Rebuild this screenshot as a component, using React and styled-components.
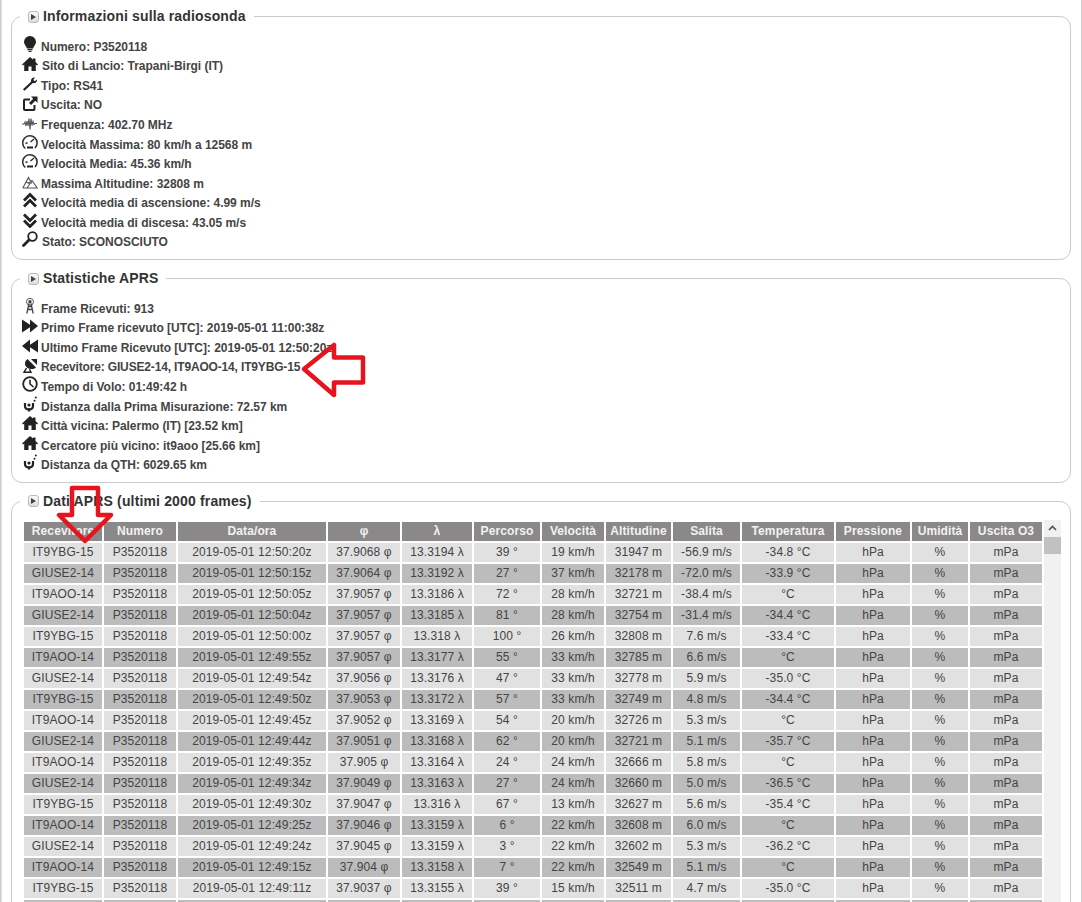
import React from "react";
import styled, { createGlobalStyle } from "styled-components";

const GlobalStyle = createGlobalStyle`
  html, body {
    margin: 0;
    height: 100%;
    overflow: hidden;
    background: #fff;
  }
  body {
    font-family: "Liberation Sans", Arial, sans-serif;
    color: #444;
  }
`;

const Page = styled.div`
  position: relative;
  box-sizing: border-box;
  height: 902px;
  overflow: hidden;
  padding: 9px 10px 0 11px;
  border-left: 1px solid #ccc;
  border-right: 1px solid #ccc;
  background: #fff;
  box-shadow: inset 1px 0 0 #e4e4e4;
`;

const Panel = styled.fieldset`
  margin: 0 0 11px -1px;
  padding: ${({ $top }) => $top}px 10px ${({ $top }) => 20 - $top}px 10px;
  min-width: 0;
  border: 1px solid #ccc;
  border-radius: 11px;
`;

const PanelTitle = styled.legend`
  display: flex;
  align-items: center;
  gap: 4px;
  margin-left: -2px;
  padding: 0 8px;
  height: 15px;
  font-size: 14px;
  line-height: 15px;
  font-weight: bold;
  letter-spacing: 0.15px;
  color: #333;
`;

const ToggleButton = styled.span`
  display: flex;
  align-items: center;
  justify-content: center;
  box-sizing: border-box;
  width: 11px;
  height: 12px;
  border: 1px solid #bbb;
  border-radius: 3px;
  background: linear-gradient(#fafafa, #ddd);
  &::after {
    content: "";
    border-left: 5px solid #444;
    border-top: 3px solid transparent;
    border-bottom: 3px solid transparent;
  }
`;

const InfoList = styled.div`
  display: grid;
  grid-auto-rows: 19.55px;
`;

const InfoRow = styled.div`
  display: flex;
  align-items: center;
  font-size: 12px;
  font-weight: bold;
  letter-spacing: ${({ $tight }) => ($tight ? "-0.16px" : "-0.03px")};
  color: #444;
  white-space: nowrap;
`;

const IconBox = styled.svg`
  flex: none;
  align-self: flex-start;
  width: 16px;
  height: 16px;
  margin: -1px ${({ $gap }) => $gap ?? 3}px 0 0;
`;

const TableArea = styled.div`
  display: flex;
  align-items: flex-start;
`;

const DataTable = styled.table`
  flex: none;
  table-layout: fixed;
  width: 1022px;
  border-collapse: separate;
  border-spacing: 2px;
  font-size: 12px;
  letter-spacing: 0.1px;
`;

const HeadCell = styled.th`
  height: 19px;
  padding: 0;
  background: #8a8888;
  color: #f2f2f2;
  font-weight: bold;
  text-align: center;
  white-space: nowrap;
`;

const DataRow = styled.tr`
  background: ${({ $dark }) => ($dark ? "#bcbcbc" : "#e1e1e1")};
`;

const DataCell = styled.td`
  height: 19px;
  padding: 0;
  color: #444;
  text-align: center;
  white-space: nowrap;
`;

const ScrollTrack = styled.div`
  flex: none;
  width: 17px;
  height: 500px;
  background: #f1f1f1;
`;

const ScrollArrow = styled.div`
  display: flex;
  align-items: center;
  justify-content: center;
  height: 17px;
`;

const ScrollThumb = styled.div`
  height: 17px;
  background: #c1c1c1;
`;

const MarkArrow = styled.svg`
  position: absolute;
  left: ${({ $x }) => $x}px;
  top: ${({ $y }) => $y}px;
  width: ${({ $w }) => $w}px;
  height: ${({ $h }) => $h}px;
  overflow: visible;
  pointer-events: none;
`;

const icons = {
  bulb: (
    <>
      <path d="M2 6a5.900 5.900 0 1 1 12 0c0 2.700-2.300 3.800-3 6.400H5C4.300 9.800 2 8.700 2 6z" />
      <rect x="5.500" y="13" width="5" height="1.300" />
      <rect x="6.500" y="15" width="3" height="1" />
    </>
  ),
  home: <path d="M8 1L0 8.500l1 1 1.200-.9V15h4.300v-4.500h3V15h4.300V8.600l1.200.9 1-1L13.500 6V2.500H11v1.100z" />,
  wrench: (
    <path d="M1 14.200l1.500 1.500 8.300-7.600c1.600.5 3.400-.2 4-1.800l.2-1.800-2.200 1.700-1.500-1.300 1.700-2.300c-2-.4-3.800.8-4 2.800v1.300z" />
  ),
  share: (
    <>
      <path d="M8 4.500H3a1 1 0 0 0-1 1V14a1 1 0 0 0 1 1h8.500a1 1 0 0 0 1-1V10" fill="none" stroke="#222" strokeWidth="2" />
      <path d="M9 1.500h6.500V8l-2.200-2.200L9 10 7 8l4.200-4.300z" />
    </>
  ),
  wave: (
    <path
      d="M0 10h2l1-2 1 4 1-5 1 5 1-7.500 1 11 1-11 1 7 1-4 1 3 1-1h2"
      fill="none"
      stroke="#555"
      strokeWidth="1.100"
    />
  ),
  gauge: (
    <>
      <path d="M3.300 14.500A7.200 7.200 0 1 1 13 14" fill="none" stroke="#333" strokeWidth="1.600" />
      <path d="M3.500 9.500l2-.7M12 5L8.500 8" fill="none" stroke="#333" strokeWidth="1.500" />
      <rect x="5" y="12.500" width="6" height="2" fill="#222" />
    </>
  ),
  peaks: (
    <path
      d="M.8 15L6.500 4.500l3.300 6M5 15l5-7.500L15.200 15zM.8 15h14.400M4.500 9l2 1.200 1.200-1.200"
      fill="none"
      stroke="#555"
      strokeWidth="1.100"
    />
  ),
  up: <path d="M2 8.500l6-6 6 6M2 14.500l6-6 6 6" fill="none" stroke="#222" strokeWidth="2.800" />,
  down: <path d="M2 2.500l6 6 6-6M2 8.500l6 6 6-6" fill="none" stroke="#222" strokeWidth="2.800" />,
  search: (
    <>
      <circle cx="10.500" cy="5.500" r="4.300" fill="none" stroke="#222" strokeWidth="1.800" />
      <path d="M7 9l-5.500 5.500" stroke="#222" strokeWidth="2.800" strokeLinecap="round" />
    </>
  ),
  tower: (
    <>
      <circle cx="8" cy="3.800" r="3.500" fill="none" stroke="#555" strokeWidth="1" />
      <circle cx="8" cy="3.800" r="1.700" fill="#444" />
      <path d="M7 5.500L4.800 15.500M9 5.500l2.200 10M5.800 11.500h4.400M6.500 8.500h3" fill="none" stroke="#444" strokeWidth="1.300" />
    </>
  ),
  forward: <path d="M0 1.500l8 5.200V1.500L16 8l-8 6.500V9.300l-8 5.200z" />,
  backward: <path d="M16 2.500L8 7.700V2.500L0 9l8 6.500v-5.200l8 5.200z" />,
  dish: (
    <>
      <path d="M5.500 2l8.500 8.500c-2.700 2.300-7 2-9.500-.5C2 7.500 2.700 4.300 5.500 2z" />
      <path d="M4.500 11l-2.500 4.300h7l-1.500-3" fill="none" stroke="#222" strokeWidth="1.400" />
      <path d="M9 2h6v6z" />
    </>
  ),
  clock: (
    <>
      <circle cx="8" cy="8" r="6.800" fill="none" stroke="#222" strokeWidth="1.800" />
      <path d="M8 3.800V8l3.500 3" fill="none" stroke="#222" strokeWidth="1.600" />
    </>
  ),
  scope: (
    <>
      <path d="M3 7v3c0 4.500 8 4.500 8 0V7" fill="none" stroke="#222" strokeWidth="2.200" />
      <path d="M7 12.500v3" stroke="#222" strokeWidth="2.200" />
      <circle cx="7" cy="9" r="1.600" />
      <circle cx="12.500" cy="4.800" r="1" />
      <circle cx="13.800" cy="1.600" r="1" />
    </>
  ),
};

const Icon = ({ name, gap }) => (
  <IconBox viewBox="0 0 16 16" fill="#222" $gap={gap}>
    {icons[name]}
  </IconBox>
);

const radiosonde = [
  { icon: "bulb", text: "Numero: P3520118" },
  { icon: "home", text: "Sito di Lancio: Trapani-Birgi (IT)", gap: 4 },
  { icon: "wrench", text: "Tipo: RS41" },
  { icon: "share", text: "Uscita: NO" },
  { icon: "wave", text: "Frequenza: 402.70 MHz" },
  { icon: "gauge", text: "Velocità Massima: 80 km/h a 12568 m" },
  { icon: "gauge", text: "Velocità Media: 45.36 km/h" },
  { icon: "peaks", text: "Massima Altitudine: 32808 m" },
  { icon: "up", text: "Velocità media di ascensione: 4.99 m/s" },
  { icon: "down", text: "Velocità media di discesa: 43.05 m/s" },
  { icon: "search", text: "Stato: SCONOSCIUTO", gap: 4 },
];

const aprsStats = [
  { icon: "tower", text: "Frame Ricevuti: 913" },
  { icon: "forward", text: "Primo Frame ricevuto [UTC]: 2019-05-01 11:00:38z" },
  { icon: "backward", text: "Ultimo Frame Ricevuto [UTC]: 2019-05-01 12:50:20z" },
  { icon: "dish", text: "Recevitore: GIUSE2-14, IT9AOO-14, IT9YBG-15", tight: true },
  { icon: "clock", text: "Tempo di Volo: 01:49:42 h" },
  { icon: "scope", text: "Distanza dalla Prima Misurazione: 72.57 km" },
  { icon: "home", text: "Città vicina: Palermo (IT) [23.52 km]" },
  { icon: "home", text: "Cercatore più vicino: it9aoo [25.66 km]" },
  { icon: "scope", text: "Distanza da QTH: 6029.65 km" },
];

const columns = [
  ["Recevitore", 78],
  ["Numero", 72],
  ["Data/ora", 148],
  ["φ", 72],
  ["λ", 70],
  ["Percorso", 66],
  ["Velocità", 62],
  ["Altitudine", 65],
  ["Salita", 67],
  ["Temperatura", 92],
  ["Pressione", 74],
  ["Umidità", 56],
  ["Uscita O3", 72],
];

const frames = [
  ["IT9YBG-15", "12:50:20z", "37.9068", "13.3194", 39, 19, 31947, "-56.9", "-34.8"],
  ["GIUSE2-14", "12:50:15z", "37.9064", "13.3192", 27, 37, 32178, "-72.0", "-33.9"],
  ["IT9AOO-14", "12:50:05z", "37.9057", "13.3186", 72, 28, 32721, "-38.4", ""],
  ["GIUSE2-14", "12:50:04z", "37.9057", "13.3185", 81, 28, 32754, "-31.4", "-34.4"],
  ["IT9YBG-15", "12:50:00z", "37.9057", "13.318", 100, 26, 32808, "7.6", "-33.4"],
  ["IT9AOO-14", "12:49:55z", "37.9057", "13.3177", 55, 33, 32785, "6.6", ""],
  ["GIUSE2-14", "12:49:54z", "37.9056", "13.3176", 47, 33, 32778, "5.9", "-35.0"],
  ["IT9YBG-15", "12:49:50z", "37.9053", "13.3172", 57, 33, 32749, "4.8", "-34.4"],
  ["IT9AOO-14", "12:49:45z", "37.9052", "13.3169", 54, 20, 32726, "5.3", ""],
  ["GIUSE2-14", "12:49:44z", "37.9051", "13.3168", 62, 20, 32721, "5.1", "-35.7"],
  ["IT9AOO-14", "12:49:35z", "37.905", "13.3164", 24, 24, 32666, "5.8", ""],
  ["GIUSE2-14", "12:49:34z", "37.9049", "13.3163", 27, 24, 32660, "5.0", "-36.5"],
  ["IT9YBG-15", "12:49:30z", "37.9047", "13.316", 67, 13, 32627, "5.6", "-35.4"],
  ["IT9AOO-14", "12:49:25z", "37.9046", "13.3159", 6, 22, 32608, "6.0", ""],
  ["GIUSE2-14", "12:49:24z", "37.9045", "13.3159", 3, 22, 32602, "5.3", "-36.2"],
  ["IT9AOO-14", "12:49:15z", "37.904", "13.3158", 7, 22, 32549, "5.1", ""],
  ["IT9YBG-15", "12:49:11z", "37.9037", "13.3155", 39, 15, 32511, "4.7", "-35.0"],
];

const Section = ({ title, top, children }) => (
  <Panel $top={top}>
    <PanelTitle>
      <ToggleButton />
      {title}
    </PanelTitle>
    {children}
  </Panel>
);

const Info = ({ rows }) => (
  <InfoList>
    {rows.map(({ icon, text, gap, tight }) => (
      <InfoRow key={text} $tight={tight}>
        <Icon name={icon} gap={gap} />
        {text}
      </InfoRow>
    ))}
  </InfoList>
);

export default function App() {
  return (
    <>
      <GlobalStyle />
      <Page>
        <Section title="Informazioni sulla radiosonda" top={13}>
          <Info rows={radiosonde} />
        </Section>
        <Section title="Statistiche APRS" top={13}>
          <Info rows={aprsStats} />
        </Section>
        <Section title="Dati APRS (ultimi 2000 frames)" top={11}>
          <TableArea>
            <DataTable>
              <colgroup>
                {columns.map(([name, width]) => (
                  <col key={name} style={{ width }} />
                ))}
              </colgroup>
              <thead>
                <tr>
                  {columns.map(([name]) => (
                    <HeadCell key={name}>{name}</HeadCell>
                  ))}
                </tr>
              </thead>
              <tbody>
                {frames.map((f, i) => (
                  <DataRow key={f[1]} $dark={i % 2 === 1}>
                    <DataCell>{f[0]}</DataCell>
                    <DataCell>P3520118</DataCell>
                    <DataCell>2019-05-01 {f[1]}</DataCell>
                    <DataCell>{f[2]} φ</DataCell>
                    <DataCell>{f[3]} λ</DataCell>
                    <DataCell>{f[4]} °</DataCell>
                    <DataCell>{f[5]} km/h</DataCell>
                    <DataCell>{f[6]} m</DataCell>
                    <DataCell>{f[7]} m/s</DataCell>
                    <DataCell>{f[8]} °C</DataCell>
                    <DataCell>hPa</DataCell>
                    <DataCell>%</DataCell>
                    <DataCell>mPa</DataCell>
                  </DataRow>
                ))}
                <DataRow $dark>
                  {columns.map(([name]) => (
                    <DataCell key={name} />
                  ))}
                </DataRow>
              </tbody>
            </DataTable>
            <ScrollTrack>
              <ScrollArrow>
                <svg width="9" height="6" viewBox="0 0 9 6">
                  <path d="M1 5l3.500-3.500L8 5" fill="none" stroke="#505050" strokeWidth="1.600" />
                </svg>
              </ScrollArrow>
              <ScrollThumb />
            </ScrollTrack>
          </TableArea>
        </Section>
        <MarkArrow $x={301} $y={343} $w={64} $h={54} viewBox="0 0 64 54">
          <path
            d="M2 26L32 2v12.500h29v25H32V52z"
            fill="none"
            stroke="#e5141f"
            strokeWidth="4.500"
            strokeLinejoin="round"
          />
        </MarkArrow>
        <MarkArrow $x={55} $y={486} $w={58} $h={58} viewBox="0 0 58 58">
          <path
            d="M16 2h26v27h13L29 55 3 29h13z"
            fill="none"
            stroke="#e5141f"
            strokeWidth="4.500"
            strokeLinejoin="round"
          />
        </MarkArrow>
      </Page>
    </>
  );
}
